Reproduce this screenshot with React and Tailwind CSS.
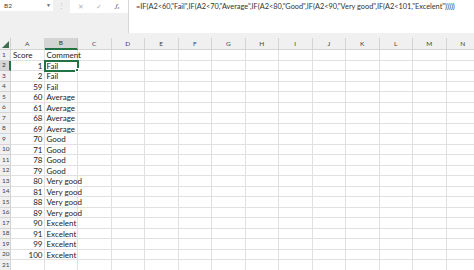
import React from "react";

const cols = ["A", "B", "C", "D", "E", "F", "G", "H", "I", "J", "K", "L", "M", "N"];

const data = [
  ["Score", "Comment"],
  [1, "Fail"],
  [2, "Fail"],
  [59, "Fail"],
  [60, "Average"],
  [61, "Average"],
  [68, "Average"],
  [69, "Average"],
  [70, "Good"],
  [71, "Good"],
  [78, "Good"],
  [79, "Good"],
  [80, "Very good"],
  [81, "Very good"],
  [88, "Very good"],
  [89, "Very good"],
  [90, "Excelent"],
  [91, "Excelent"],
  [99, "Excelent"],
  [100, "Excelent"],
  ["", ""],
];

const formula =
  '=IF(A2<60,"Fail",IF(A2<70,"Average",IF(A2<80,"Good",IF(A2<90,"Very good",IF(A2<101,"Excelent")))))';

function FormulaBar() {
  return (
    <div className="flex items-start h-[38px] bg-[#f0f0f0]">
      <div className="w-[53px] h-[11px] bg-white flex items-center justify-between pl-[4px] pr-[2px] text-[6.5px] text-[#444]">
        <span>B2</span>
        <span className="text-[5px] text-[#666]">▼</span>
      </div>
      <div className="w-[17px] h-[11px] flex items-center justify-center text-[7px] text-[#bbb]">⋮</div>
      <div className="w-[58px] h-[13px] bg-white flex items-center text-[#b5b5b5] text-[7px]">
        <span className="w-[19px] text-center pl-[2px]">✕</span>
        <span className="w-[19px] text-center">✓</span>
        <span className="w-[19px] text-center text-[#555] italic font-serif text-[7px]">f<sub className="text-[4px]">x</sub></span>
      </div>
      <div className="flex-1 h-[33px] bg-white border-l border-[#d6d6d6] pl-[7px] pt-[1px] text-[7.35px] text-[#333] whitespace-nowrap overflow-hidden">
        {formula}
      </div>
    </div>
  );
}

function Grid() {
  return (
    <div className="grid grid-cols-[11px_repeat(14,33.5px)] grid-rows-[12px_repeat(21,10.5px)]">
      <div className="bg-[#f0f0f0] border-r border-b border-[#d0d0d0] flex items-end justify-end p-[1px]">
        <svg width="7" height="7" viewBox="0 0 7 7">
          <polygon points="7,0 7,7 0,7" fill="#3f6e4c" />
        </svg>
      </div>
      {cols.map((c) => (
        <div
          key={c}
          className={
            c === "B"
              ? "bg-[#d5d5d5] border-r border-[#c6c6c6] border-b-2 border-b-[#217346] flex items-center justify-center text-[6.5px] text-[#333]"
              : "bg-[#f0f0f0] border-r border-b border-[#d4d4d4] flex items-center justify-center text-[6.5px] text-[#444]"
          }
        >
          {c}
        </div>
      ))}
      {data.map((row, i) => (
        <React.Fragment key={i}>
          <div
            className={
              i === 1
                ? "bg-[#d5d5d5] border-r-2 border-r-[#217346] border-b border-[#c6c6c6] flex items-center pl-[2px] text-[6.5px] text-[#333]"
                : "bg-[#f0f0f0] border-r border-b border-[#d4d4d4] flex items-center pl-[2px] text-[6.5px] text-[#444]"
            }
          >
            {i + 1}
          </div>
          <div
            className={
              "border-r border-b border-[#e1e1e1] flex items-end pb-[0.5px] text-[8px] leading-none text-[#222] whitespace-nowrap " +
              (i === 0 ? "justify-start pl-[2px]" : "justify-end pr-[1px]")
            }
          >
            {row[0]}
          </div>
          <div
            className={
              "border-r border-b border-[#e1e1e1] flex items-end pb-[0.5px] pl-[2px] text-[8px] leading-none text-[#222] whitespace-nowrap overflow-visible " +
              (i === 1 ? "relative z-10 outline-2 outline-[#217346] -outline-offset-1" : "")
            }
          >
            {row[1]}
            {i === 1 && (
              <span className="absolute right-[-2px] bottom-[-2px] w-[4px] h-[4px] bg-[#217346] border border-white" />
            )}
          </div>
          {cols.slice(2).map((c) => (
            <div key={c} className="border-r border-b border-[#e1e1e1]" />
          ))}
        </React.Fragment>
      ))}
    </div>
  );
}

export default function App() {
  return (
    <div className="w-[474px] h-[270px] overflow-hidden bg-white font-['Lato',_'Open_Sans',_sans-serif]">
      <FormulaBar />
      <Grid />
    </div>
  );
}
